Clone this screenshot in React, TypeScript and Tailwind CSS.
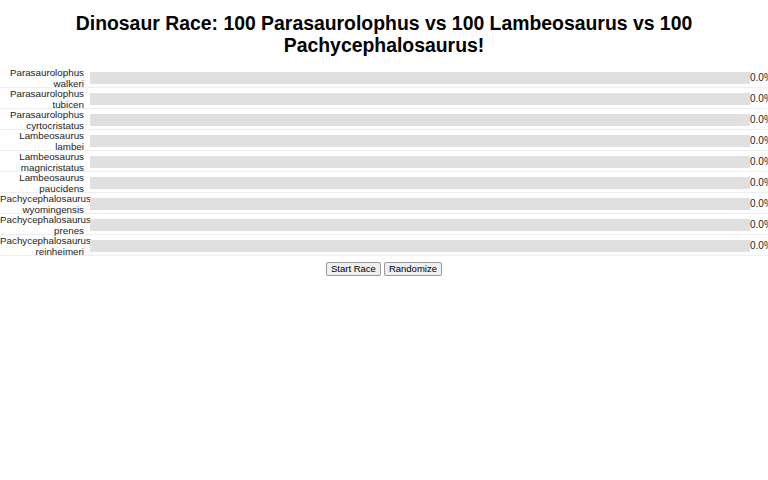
const RACERS = [
  ['Parasaurolophus', 'walkeri'],
  ['Parasaurolophus', 'tubicen'],
  ['Parasaurolophus', 'cyrtocristatus'],
  ['Lambeosaurus', 'lambei'],
  ['Lambeosaurus', 'magnicristatus'],
  ['Lambeosaurus', 'paucidens'],
  ['Pachycephalosaurus', 'wyomingensis'],
  ['Pachycephalosaurus', 'prenes'],
  ['Pachycephalosaurus', 'reinheimeri'],
];

export default function App() {
  return (
    <div className="w-[768px] h-[480px] overflow-hidden bg-white text-black font-['Liberation_Sans',Arial,sans-serif]">
      <h1 className="pt-[12px] text-center text-[19.4px] leading-[22px] font-bold">
        Dinosaur Race: 100 Parasaurolophus vs 100 Lambeosaurus vs 100 Pachycephalosaurus!
      </h1>

      {/* race track */}
      <div className="mt-[11px] flex flex-col">
        {RACERS.map(([genus, species]) => {
          const pct = 0;
          return (
            <div key={species} className="flex items-center border-b border-[#eeeeee] h-[21px]">
              <div className="w-[90px] shrink-0 mt-[2px] pr-[6px] text-right text-[9.8px] leading-[11px] text-[#222]">
                <div>{genus}</div>
                <div>{species}</div>
              </div>
              <div className="w-[660px] shrink-0 mt-[2px] h-[12px] bg-[#e0e0e0]">
                <div className="h-full bg-[#4caf50]" style={{ width: `${pct}%` }} />
              </div>
              <span className="shrink-0 mt-[2px] text-[10px] leading-[10px] text-[#222]">{pct.toFixed(1)}%</span>
            </div>
          );
        })}
      </div>

      <div className="mt-[6px] flex justify-center gap-[3px]">
        <button className="px-[4px] h-[14px] text-[9.5px] leading-[10px] bg-[#efefef] border border-[#9a9a9a] rounded-[2px]">Start Race</button>
        <button className="px-[4px] h-[14px] text-[9.5px] leading-[10px] bg-[#efefef] border border-[#9a9a9a] rounded-[2px]">Randomize</button>
      </div>
    </div>
  );
}
